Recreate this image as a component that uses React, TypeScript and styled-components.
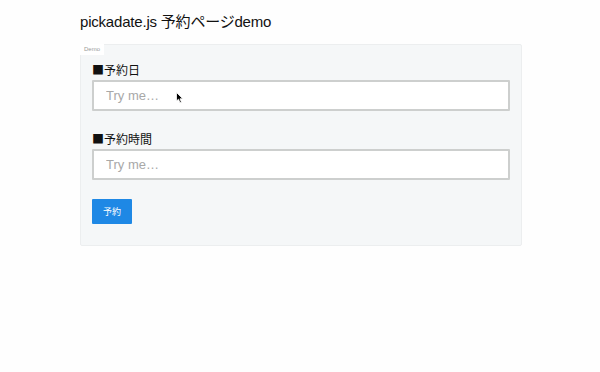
import {createGlobalStyle, styled} from 'styled-components';

const GlobalStyle = createGlobalStyle`
  html, body {
    margin: 0;
    padding: 0;
    background: #fefefe;
    font-family: "Liberation Sans", "Noto Sans CJK JP", sans-serif;
    color: #111;
  }
`;

const Page = styled.div`
  width: 442px;
  margin: 0 0 0 80px;
  padding-top: 12px;
`;

const Title = styled.h1`
  margin: 0 0 12px;
  font-size: 15px;
  line-height: 20px;
  font-weight: 400;
  letter-spacing: -0.2px;
`;

const Panel = styled.div`
  position: relative;
  background: #f5f7f8;
  border: 1px solid #eceeef;
  border-radius: 2px;
  padding: 17px 11px 21px;
`;

const Tab = styled.span`
  position: absolute;
  top: -1px;
  left: -1px;
  background: #fff;
  color: #9a9a9a;
  font-size: 6px;
  line-height: 11px;
  padding: 0 4px;
`;

const Field = styled.div`
  margin-bottom: 20px;
`;

const Label = styled.label`
  display: block;
  font-family: "Noto Sans CJK JP", sans-serif;
  font-size: 12px;
  line-height: 16px;
  margin-bottom: 2px;
`;

const Input = styled.input`
  box-sizing: border-box;
  display: block;
  width: 418px;
  height: 31px;
  border: 2px solid #cdcfce;
  border-radius: 1px;
  background: #fff;
  padding: 0 12px;
  font-family: "Liberation Sans", sans-serif;
  font-size: 13px;
  outline: none;
  &::placeholder {
    color: #a8a8a8;
  }
`;

const Button = styled.button`
  display: block;
  margin-top: -1px;
  width: 40px;
  height: 25px;
  border: none;
  border-radius: 1px;
  background: #1e88e5;
  color: #fff;
  font-family: "Noto Sans CJK JP", sans-serif;
  font-size: 9px;
  padding: 0;
`;

const Cursor = styled.svg`
  position: absolute;
  left: 95px;
  top: 47px;
`;

export default function App() {
  return (
    <>
      <GlobalStyle />
      <Page>
        <Title>pickadate.js 予約ページdemo</Title>
        <Panel>
          <Tab>Demo</Tab>
          <Field>
            <Label>■予約日</Label>
            <Input placeholder="Try me…" />
          </Field>
          <Field>
            <Label>■予約時間</Label>
            <Input placeholder="Try me…" />
          </Field>
          <Button>予約</Button>
          <Cursor width="8" height="12" viewBox="0 0 8 12">
            <path d="M0.5 0.5 L0.5 9 L2.5 7.2 L4 10.8 L5.4 10.2 L4 6.8 L6.8 6.8 Z" fill="#000" stroke="#fff" strokeWidth="0.8" />
          </Cursor>
        </Panel>
      </Page>
    </>
  );
}
